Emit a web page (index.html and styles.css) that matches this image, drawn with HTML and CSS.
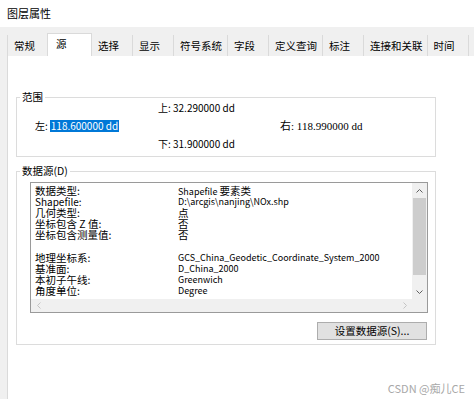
FILE: index.html
```html
<!DOCTYPE html>
<html lang="zh-CN">
<head>
<meta charset="utf-8">
<title>图层属性</title>
<link rel="stylesheet" href="styles.css">
</head>
<body>
<div class="title">图层属性</div>
<div class="tabbar">
  <div class="tab first">常规</div>
  <div class="tab active">源</div>
  <div class="tab">选择</div>
  <div class="tab">显示</div>
  <div class="tab">符号系统</div>
  <div class="tab">字段</div>
  <div class="tab">定义查询</div>
  <div class="tab">标注</div>
  <div class="tab wide">连接和关联</div>
  <div class="tab">时间</div>
  <div class="tab">HTML 弹出窗口</div>
</div>
<div class="body">
  <div class="panel">
    <fieldset class="group range">
      <legend>范围</legend>
      <div class="extent">
        <span class="ext-top">上: 32.290000 dd</span>
        <span class="ext-left">左:<span class="sel">118.600000 dd</span></span>
        <span class="ext-right">右: 118.990000 dd</span>
        <span class="ext-bottom">下: 31.900000 dd</span>
      </div>
    </fieldset>
    <fieldset class="group source">
      <legend>数据源(D)</legend>
      <div class="listbox">
        <div class="list-content">
          <div class="row"><span>数据类型:</span><span><span class="latin">Shapefile </span>要素类</span></div>
          <div class="row"><span class="latin-label">Shapefile:</span><span class="latin">D:\arcgis\nanjing\NOx.shp</span></div>
          <div class="row"><span>几何类型:</span><span>点</span></div>
          <div class="row"><span>坐标包含 Z 值:</span><span>否</span></div>
          <div class="row"><span>坐标包含测量值:</span><span>否</span></div>
          <div class="row blank"></div>
          <div class="row"><span>地理坐标系:</span><span class="latin">GCS_China_Geodetic_Coordinate_System_2000</span></div>
          <div class="row"><span>基准面:</span><span class="latin">D_China_2000</span></div>
          <div class="row"><span>本初子午线:</span><span class="latin">Greenwich</span></div>
          <div class="row"><span>角度单位:</span><span class="latin">Degree</span></div>
        </div>
        <div class="vscroll">
          <div class="arrow"><svg width="7" height="4" viewBox="0 0 7 4"><path d="M0.5 3.5 L3.5 0.5 L6.5 3.5" fill="none" stroke="#606060"/></svg></div>
          <div class="thumb"></div>
          <div class="spacer"></div>
          <div class="arrow"><svg width="7" height="4" viewBox="0 0 7 4"><path d="M0.5 0.5 L3.5 3.5 L6.5 0.5" fill="none" stroke="#606060"/></svg></div>
        </div>
        <div class="hscroll">
          <div class="harrow"><svg width="4" height="7" viewBox="0 0 4 7"><path d="M3.5 0.5 L0.5 3.5 L3.5 6.5" fill="none" stroke="#c4c4c4"/></svg></div>
          <div class="spacer"></div>
          <div class="harrow"><svg width="4" height="7" viewBox="0 0 4 7"><path d="M0.5 0.5 L3.5 3.5 L0.5 6.5" fill="none" stroke="#c4c4c4"/></svg></div>
        </div>
        <div class="corner"></div>
      </div>
      <div class="actions"><button class="btn" type="button">设置数据源(S)...</button></div>
    </fieldset>
    <div class="watermark">CSDN @痴儿CE</div>
  </div>
</div>
</body>
</html>
```
FILE: styles.css
```css
html, body {
  margin: 0;
  padding: 0;
  width: 474px;
  height: 399px;
  overflow: hidden;
  background: #fff;
  font-family: "Noto Sans CJK SC", sans-serif;
  color: #000;
}

.title {
  height: 27px;
  padding-left: 7px;
  font-size: 11px;
  line-height: 26px;
  box-sizing: border-box;
}

.tabbar {
  display: flex;
  align-items: flex-end;
  height: 29px;
  padding-left: 7px;
  background: #f0f0f0;
  overflow: hidden;
  box-sizing: border-box;
}

.tab {
  flex: none;
  height: 21px;
  min-width: 41px;
  padding: 0 5px 0 6px;
  box-sizing: border-box;
  border-right: 1px solid #dadada;
  font-size: 10.5px;
  line-height: 21px;
  white-space: nowrap;
}

.tab.first {
  border-left: 1px solid #dadada;
}

.tab.wide {
  padding-right: 4px;
}

.tab.active {
  height: 23px;
  min-width: 45px;
  margin-left: -1px;
  padding-left: 8px;
  background: #fff;
  border-left: 1px solid #dadada;
  border-top: 1px solid #dadada;
  line-height: 19px;
}

.body {
  height: 343px;
  padding-left: 7px;
  background: #f0f0f0;
  overflow: hidden;
}

.panel {
  height: 100%;
  padding-left: 8px;
  background: #fff;
  border-left: 1px solid #dadada;
  box-sizing: border-box;
  overflow: hidden;
}

.group {
  width: 420px;
  margin: 0;
  padding: 0;
  min-width: 0;
  box-sizing: border-box;
  border: 1px solid #dcdcdc;
}

.group legend {
  margin-left: 3px;
  padding: 0 2px;
  font-size: 10.5px;
  line-height: 12px;
}

.range {
  margin-top: 35px;
}

.extent {
  display: grid;
  grid-template-columns: 123px 122px auto;
  grid-template-rows: 18px 18px 18px;
  margin-top: -4px;
  padding: 0 0 3px 18px;
  font-size: 10px;
  line-height: 18px;
  white-space: nowrap;
}

.ext-top { grid-column: 2; grid-row: 1; }
.ext-left { grid-column: 1; grid-row: 2; }
.ext-right {
  grid-column: 3;
  grid-row: 2;
  font-family: "Liberation Serif", "Noto Sans CJK SC", serif;
  font-size: 11px;
}
.ext-bottom { grid-column: 2; grid-row: 3; }

.sel {
  display: inline-block;
  margin-left: 2px;
  padding: 0 1px;
  background: #0078d7;
  color: #fff;
  line-height: 12px;
}

.source {
  margin-top: 8px;
}

.listbox {
  display: grid;
  grid-template-columns: 1fr 15px;
  grid-template-rows: 1fr 13px;
  height: 131px;
  margin: 5px 7px 0 13px;
  border: 1px solid #9a9a9a;
  box-sizing: border-box;
}

.list-content {
  padding: 2px 0 0 4px;
  overflow: hidden;
  font-size: 10.5px;
  line-height: 11.1px;
  white-space: nowrap;
}

.row {
  display: grid;
  grid-template-columns: 143px 1fr;
  height: 11.1px;
}

.latin {
  font-size: 9px;
}

.latin-label {
  font-size: 10px;
}

.vscroll {
  display: flex;
  flex-direction: column;
  background: #f0f0f0;
}

.arrow {
  height: 15px;
  display: flex;
  align-items: center;
  justify-content: center;
  flex: none;
}

.thumb {
  height: 77px;
  margin: 0 1px;
  background: #cdcdcd;
  flex: none;
}

.spacer {
  flex: 1;
}

.hscroll {
  display: flex;
  background: #f0f0f0;
}

.harrow {
  width: 15px;
  display: flex;
  align-items: center;
  justify-content: center;
  flex: none;
}

.corner {
  background: #f0f0f0;
}

.actions {
  display: flex;
  justify-content: flex-end;
  margin: 9px 8px 4px 0;
}

.btn {
  width: 110px;
  height: 18px;
  padding: 0;
  background: #e1e1e1;
  border: 1px solid #adadad;
  font-family: "Noto Sans CJK SC", sans-serif;
  font-size: 10.5px;
  line-height: 16px;
  color: #000;
}

.watermark {
  margin-top: 36px;
  padding-right: 9px;
  text-align: right;
  color: #a8a8a8;
  font-size: 11px;
  line-height: 14px;
}
```
